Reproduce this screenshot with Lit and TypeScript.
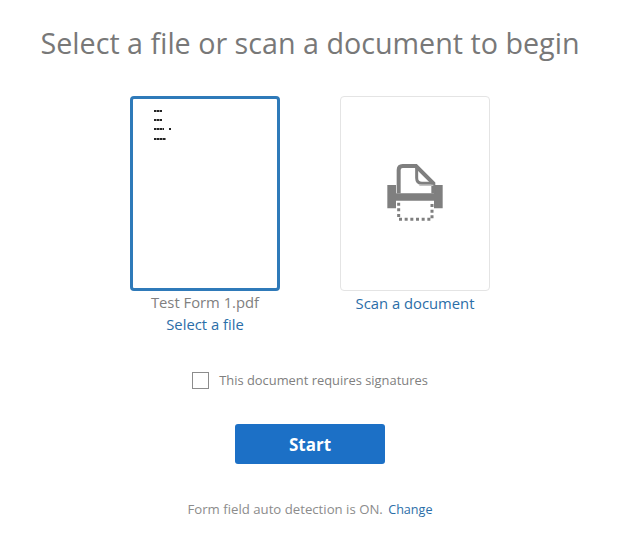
import { LitElement, css, html } from 'lit';
import { customElement } from 'lit/decorators.js';

@customElement('app-root')
export class AppRoot extends LitElement {
  static override styles = css`
    :host {
      display: block;
      width: 617px;
      height: 546px;
      overflow: hidden;
      background: #fff;
      font-family: 'Open Sans', 'Noto Sans', sans-serif;
    }

    .page {
      display: flex;
      flex-direction: column;
      align-items: center;
      width: 620px;
      padding-top: 24px;
    }

    h1 {
      margin: 0;
      font-size: 28.7px;
      line-height: 38px;
      font-weight: 400;
      color: #787878;
      white-space: nowrap;
    }

    .choices {
      display: flex;
      gap: 60px;
      margin-top: 34px;
    }

    .choice {
      display: flex;
      flex-direction: column;
      align-items: center;
      width: 150px;
      font-size: 14.8px;
      line-height: 21px;
    }

    .sheet {
      box-sizing: border-box;
      width: 150px;
      height: 195px;
      border-radius: 4px;
      margin-bottom: 1px;
    }

    .selected {
      border: 3px solid #2f7ab9;
      padding: 11px 21px;
    }

    .empty {
      display: flex;
      align-items: center;
      justify-content: center;
      border: 1px solid #e4e4e4;
    }

    .preview {
      display: flex;
      flex-direction: column;
      align-items: flex-start;
      gap: 7px;
    }

    .preview div {
      display: flex;
      gap: 5px;
      height: 2px;
    }

    .preview .last {
      margin-top: 1px;
    }

    .preview i {
      display: block;
      height: 2px;
      background: repeating-linear-gradient(90deg, #222 0 2px, #888 2px 3px);
    }

    .file-name {
      color: #808080;
    }

    a {
      color: #2b6ea8;
      text-decoration: none;
    }

    .select-link,
    .scan-link {
      margin-top: 1px;
    }

    .signatures {
      display: flex;
      align-items: center;
      gap: 10px;
      margin-top: 36px;
      font-size: 12.9px;
      line-height: 18px;
      color: #808080;
    }

    .box {
      box-sizing: border-box;
      width: 17px;
      height: 17px;
      border: 1px solid #8c8c8c;
    }

    button {
      width: 150px;
      height: 40px;
      margin-top: 35px;
      border: none;
      border-radius: 3px;
      background: #1c70c6;
      color: #fff;
      font: 700 17px 'Open Sans', 'Noto Sans', sans-serif;
    }

    .detection {
      margin-top: 36px;
      font-size: 13.2px;
      line-height: 18px;
      color: #8c8c8c;
    }

    .detection a {
      margin-left: 2px;
      font-size: 12.6px;
    }

    svg {
      display: block;
      margin-bottom: 2px;
    }
  `;

  private renderScanner() {
    return html`
      <svg width="90" height="85" viewBox="0 0 270 255" fill="none" aria-hidden="true">
        <path d="M52 105H78V130H192V105H218V175H192V152H78V175H52Z" fill="#7f7f7f" />
        <path d="M86 130V60Q86 48 98 48H138L190 100V130" stroke="#7f7f7f" stroke-width="12" />
        <path d="M140 50V84Q140 100 156 100H190" stroke="#7f7f7f" stroke-width="9" />
        <path d="M148 106H190" stroke="#c4c4c4" stroke-width="4" />
        <path
          d="M86 158V208H186V158"
          stroke="#7f7f7f"
          stroke-width="9"
          stroke-dasharray="9 8"
        />
      </svg>
    `;
  }

  override render() {
    return html`
      <div class="page">
        <h1>Select a file or scan a document to begin</h1>
        <div class="choices">
          <div class="choice">
            <div class="sheet selected">
              <div class="preview">
                <div><i style="width: 8px"></i></div>
                <div><i style="width: 8px"></i></div>
                <div><i style="width: 10px"></i><i style="width: 2px"></i></div>
                <div class="last"><i style="width: 12px"></i></div>
              </div>
            </div>
            <span class="file-name">Test Form 1.pdf</span>
            <a class="select-link" href="#">Select a file</a>
          </div>
          <div class="choice">
            <div class="sheet empty">${this.renderScanner()}</div>
            <a class="scan-link" href="#">Scan a document</a>
          </div>
        </div>
        <div class="signatures">
          <span class="box"></span>
          <span>This document requires signatures</span>
        </div>
        <button type="button">Start</button>
        <div class="detection">Form field auto detection is ON. <a href="#">Change</a></div>
      </div>
    `;
  }
}

declare global {
  interface HTMLElementTagNameMap {
    'app-root': AppRoot;
  }
}
